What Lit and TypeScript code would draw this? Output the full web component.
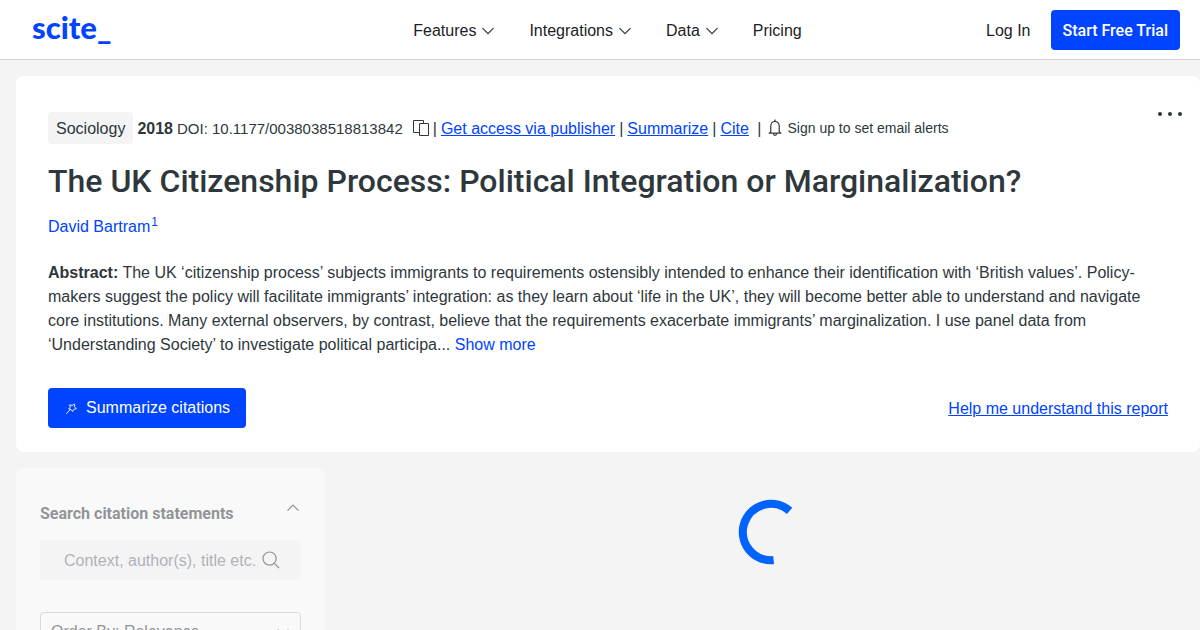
import { LitElement, html, css, svg } from "lit";
import { customElement, property } from "lit/decorators.js";

const chevron = (points: string) => html`<svg class="chevron" width="12" height="8" viewBox="0 0 12 8" fill="none" stroke="currentColor" stroke-width="1.2" aria-hidden="true">${svg`<polyline points=${points} />`}</svg>`;
const chevronDown = chevron("0.5,1.2 6,6.7 11.5,1.2");
const chevronUp = chevron("0.5,6.7 6,1.2 11.5,6.7");

@customElement("site-header")
class SiteHeader extends LitElement {
  static styles = css`
    :host { display: block; }
    .bar {
      display: grid; grid-template-columns: 1fr auto 1fr; align-items: center;
      height: 59px; padding: 0 20px 0 32px; background: #fff; border-bottom: 1px solid #d5d5d5;
    }
    .logo { padding-bottom: 6px; color: #0044ff; font: 900 31px/32px Lato, sans-serif; text-decoration: none; justify-self: start; }
    .nav { display: flex; gap: 35px; padding: 2px 0 0 3px; }
    .item {
      display: flex; align-items: center; gap: 6px; padding: 0; border: 0; background: none;
      color: #1d2226; font: inherit; text-decoration: none;
    }
    .chevron { color: #33383c; }
    .account { display: flex; align-items: center; justify-content: flex-end; gap: 20px; }
    .login { padding-top: 2px; color: #1d2226; text-decoration: none; }
    .trial {
      height: 40px; padding: 2px 12px 0; border: 0; border-radius: 4px; background: #0044ff; color: #fff;
      font: 500 16px/24px Roboto, sans-serif;
    }
  `;
  render() {
    return html`<header class="bar">
      <a class="logo" href="#">scite_</a>
      <nav class="nav">
        ${["Features", "Integrations", "Data"].map((t) => html`<button class="item">${t} ${chevronDown}</button>`)}
        <a class="item" href="#">Pricing</a>
      </nav>
      <div class="account"><a class="login" href="#">Log In</a><button class="trial">Start Free Trial</button></div>
    </header>`;
  }
}

@customElement("report-card")
class ReportCard extends LitElement {
  static styles = css`
    :host { display: block; }
    .card { position: relative; padding: 36px 32px 24px; background: #fff; border-radius: 8px; }
    .meta { display: flex; flex-wrap: wrap; align-items: center; gap: 4px; line-height: 30px; }
    .meta > * { padding-top: 2px; }
    .meta > .chip { padding: 2px 8px 0; border-radius: 4px; background: #f4f4f4; }
    .doi { display: flex; align-items: center; gap: 10px; font-size: 15px; }
    .after { display: flex; align-items: center; gap: 4px; font-size: 16px; }
    a { color: #0044ff; }
    .copy, .alert, .more { display: flex; align-items: center; padding: 0; border: 0; background: none; color: inherit; }
    .copy { padding-bottom: 2px; }
    .alert { gap: 5px; margin-left: 3px; font: 14px/24px "Liberation Sans", Arial, sans-serif; }
    .more { position: absolute; top: 32px; right: 16px; color: #2e373c; }
    .title { margin: 16px 0 0; font: 500 32px/42px Roboto, sans-serif; }
    .authors { margin: 13px 0 0; line-height: 24px; }
    .author, .toggle { text-decoration: none; }
    .author sup { margin-left: 1px; font-size: 12px; line-height: 1; }
    .abstract { margin: 22px 0 0; line-height: 24px; }
    .actions { display: flex; align-items: center; justify-content: space-between; margin-top: 31px; }
    .summarize {
      display: flex; align-items: center; gap: 8px; height: 40px; padding: 0 16px;
      border: 0; border-radius: 4px; background: #0044ff; color: #fff; font: inherit;
    }
    .help { padding-top: 2px; }
  `;
  render() {
    return html`<article class="card">
      <button class="more" aria-label="More options">
        <svg width="28" height="12" viewBox="0 0 28 12" fill="currentColor"><circle cx="4" cy="6" r="2" /><circle cx="14" cy="6" r="2" /><circle cx="24" cy="6" r="2" /></svg>
      </button>
      <div class="meta">
        <span class="chip">Sociology</span>
        <strong>2018</strong>
        <span class="doi">DOI: 10.1177/0038038518813842
          <span class="after"><button class="copy" aria-label="Copy DOI">
            <svg width="16" height="16" viewBox="0 0 16 16" fill="none" stroke="currentColor"><path d="M7 12.5H.5V.5H10.5V3.5" /><path d="M6.5 3.5H15.5V15.5H6.5Z" /></svg>
          </button>|</span></span>
        <a href="#">Get access via publisher</a>
        <span>|</span><a href="#">Summarize</a>
        <span>|</span><a href="#">Cite</a>
        <span>&nbsp;|</span>
        <button class="alert">
          <svg width="14" height="18" viewBox="0 0 14 18" fill="none" stroke="currentColor" stroke-width="1.2"><path d="M2.8 12.6V7a4.2 4.7 0 0 1 8.4 0v5.6l1.6 1.6H1.2Z" stroke-linejoin="round" /><path d="M7 2.2V.6" /><path d="M5.4 14.6a1.6 1.8 0 0 0 3.2 0" /></svg>
          Sign up to set email alerts
        </button>
      </div>
      <h1 class="title">The UK Citizenship Process: Political Integration or Marginalization?</h1>
      <p class="authors"><a class="author" href="#">David Bartram<sup>1</sup></a></p>
      <p class="abstract"><strong>Abstract:</strong> The UK ‘citizenship process’ subjects immigrants to requirements ostensibly intended to enhance their identification with ‘British values’. Policy-makers suggest the policy will facilitate immigrants’ integration: as they learn about ‘life in the UK’, they will become better able to understand and navigate core institutions. Many external observers, by contrast, believe that the requirements exacerbate immigrants’ marginalization. I use panel data from ‘Understanding Society’ to investigate political participa... <a class="toggle" href="#">Show more</a></p>
      <div class="actions">
        <button class="summarize">
          <svg width="14" height="14" viewBox="0 0 14 14" fill="none" stroke="currentColor" stroke-width="0.9" stroke-linejoin="round"><path d="M5.6 3.9 8.2 4.4 10.7 3.1 10.5 5.8 12.4 7.7 9.8 8.3 8.5 10.6 7 8.4 4.6 8 6.3 6.2Z" /><path d="M7 8 2.2 12.8" /></svg>
          Summarize citations
        </button>
        <a class="help" href="#">Help me understand this report</a>
      </div>
    </article>`;
  }
}

@customElement("citation-filters")
class CitationFilters extends LitElement {
  @property() order = "relevance";
  static styles = css`
    :host { display: block; }
    .panel { padding: 24px; border-radius: 8px; background: #fff; opacity: 0.5; }
    .head { display: flex; justify-content: space-between; padding: 8px 0 14px; }
    .heading { margin: 0; padding-top: 2px; font: 700 16px/24px Roboto, sans-serif; }
    .collapse { display: flex; height: 16px; padding: 4px 2px 0; border: 0; background: none; color: #2e373c; }
    .search { display: flex; align-items: center; height: 40px; padding: 0 21px 0 24px; border-radius: 4px; background: #f4f4f4; }
    .field { flex: 1; min-width: 0; padding: 2px 0 0; border: 0; outline: 0; background: none; font: inherit; color: inherit; }
    .field::placeholder { color: #6f7080; opacity: 1; }
    .order { position: relative; display: flex; align-items: center; margin-top: 32px; }
    .select {
      appearance: none; width: 100%; height: 40px; padding: 0 32px 0 10px;
      border: 1px solid #bfc1c4; border-radius: 4px; background: #fff; color: inherit; font: inherit;
    }
    .order .chevron { position: absolute; right: 12px; pointer-events: none; color: #999; }
  `;
  render() {
    return html`<aside class="panel">
      <div class="head">
        <h2 class="heading">Search citation statements</h2>
        <button class="collapse" aria-label="Collapse">${chevronUp}</button>
      </div>
      <label class="search">
        <input class="field" type="text" aria-label="Search citation statements" placeholder="Context, author(s), title etc." />
        <svg width="18" height="18" viewBox="0 0 18 18" fill="none" stroke="currentColor" stroke-width="1.2"><circle cx="7.6" cy="7.6" r="6.6" /><path d="M12.3 12.3 17 17" /></svg>
      </label>
      <div class="order">
        <select class="select" aria-label="Order by"><option value=${this.order}>Order By: Relevance</option></select>
        ${chevronDown}
      </div>
    </aside>`;
  }
}

@customElement("app-root")
class AppRoot extends LitElement {
  static styles = css`
    :host {
      display: block; min-height: 100vh; background: #f4f4f4; color: #2e373c;
      font: 16px/24px "Liberation Sans", Arial, sans-serif;
    }
    .main { display: grid; gap: 16px; padding: 16px 0 0 16px; }
    .results { display: grid; grid-template-columns: 309px 1fr; gap: 16px; }
    .loading { display: flex; justify-content: center; align-items: flex-start; padding-top: 31px; }
  `;
  render() {
    return html`<site-header></site-header>
      <main class="main">
        <report-card></report-card>
        <div class="results">
          <citation-filters></citation-filters>
          <div class="loading" role="status" aria-label="Loading">
            <svg width="66" height="66" viewBox="-33 -33 66 66" fill="none" stroke="#0062ff" stroke-width="8.2"><path d="M18.6 -21.2A28.2 28.2 0 1 0 2.6 28.1" /></svg>
          </div>
        </div>
      </main>`;
  }
}
